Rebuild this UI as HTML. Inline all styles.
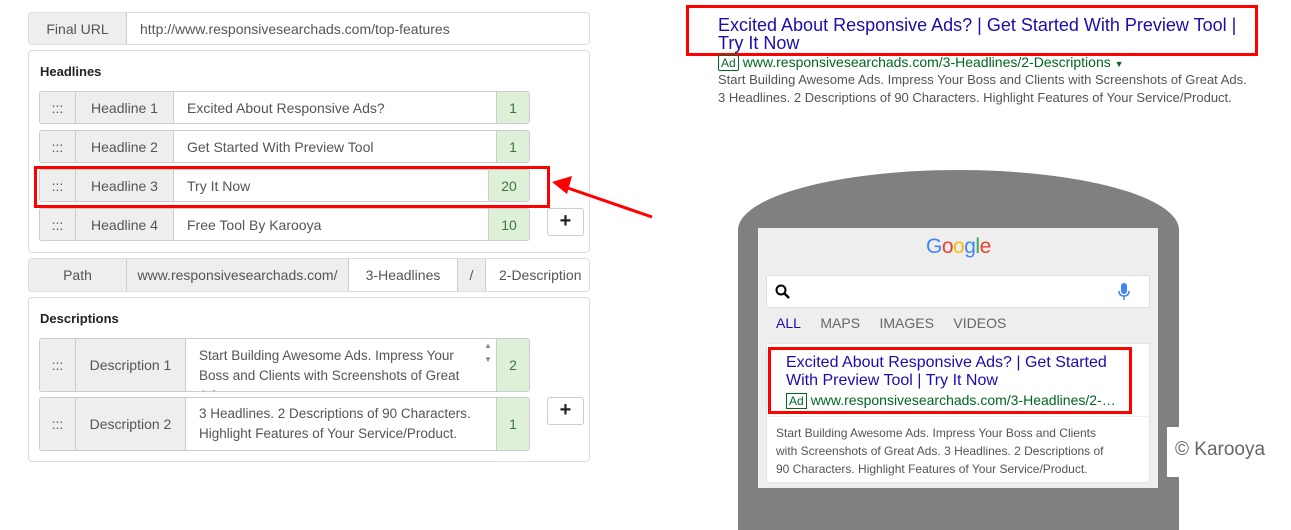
<!DOCTYPE html>
<html><head><meta charset="utf-8"><style>
*{box-sizing:border-box;margin:0;padding:0}
body{width:1291px;height:477px;overflow:hidden;background:#fff;font-family:"Liberation Sans",sans-serif;position:relative;color:#555}
.a{position:absolute}
.box{position:absolute;border:1px solid #ddd;border-radius:4px}
.cell{position:absolute;top:0;bottom:0;display:flex;align-items:center;font-size:14px;color:#555;border-right:1px solid #ccc}
.g{background:#eee;justify-content:center}
.w{background:#fff;padding-left:13px;color:#555}
.c{background:#dff0d8;color:#3c763d;justify-content:center;border-right:none}
.row{position:absolute;left:39px;width:491px;height:33px;border:1px solid #ccc;border-radius:3px;overflow:hidden}
.plus{position:absolute;left:547px;width:37px;height:28px;border:1px solid #ccc;border-radius:3px;font-size:20px;font-weight:bold;color:#222;text-align:center;line-height:25px}
.t{font-size:13px;font-weight:bold;color:#222}
.blue{color:#1a0dab}
</style></head><body>
<div class="box" style="left:28px;top:12px;width:562px;height:33px;overflow:hidden">
 <div class="cell g" style="left:0;width:98px">Final URL</div>
 <div class="cell w" style="left:98px;right:0;border:none">http://www.responsivesearchads.com/top-features</div>
</div>
<div class="box" style="left:28px;top:50px;width:562px;height:203px"></div>
<div class="a t" style="left:40px;top:64px">Headlines</div>
<div class="row" style="top:91px"><div class="cell g" style="left:0;width:36px">:::</div><div class="cell g" style="left:36px;width:98px">Headline 1</div><div class="cell w" style="left:134px;width:323px">Excited About Responsive Ads?</div><div class="cell c" style="left:457px;right:0">1</div></div>
<div class="row" style="top:130px"><div class="cell g" style="left:0;width:36px">:::</div><div class="cell g" style="left:36px;width:98px">Headline 2</div><div class="cell w" style="left:134px;width:323px">Get Started With Preview Tool</div><div class="cell c" style="left:457px;right:0">1</div></div>
<div class="row" style="top:169px"><div class="cell g" style="left:0;width:36px">:::</div><div class="cell g" style="left:36px;width:98px">Headline 3</div><div class="cell w" style="left:134px;width:315px">Try It Now</div><div class="cell c" style="left:449px;right:0">20</div></div>
<div class="row" style="top:208px"><div class="cell g" style="left:0;width:36px">:::</div><div class="cell g" style="left:36px;width:98px">Headline 4</div><div class="cell w" style="left:134px;width:315px">Free Tool By Karooya</div><div class="cell c" style="left:449px;right:0">10</div></div>
<div class="plus" style="top:208px">+</div>
<div class="a" style="left:34px;top:166px;width:516px;height:42px;border:3px solid #f00"></div>
<svg class="a" style="left:540px;top:170px" width="120" height="55"><line x1="112" y1="47" x2="22" y2="16" stroke="#f00" stroke-width="3"/><polygon points="12,12 32,6 27,24" fill="#f00"/></svg>
<div class="box" style="left:28px;top:258px;width:562px;height:34px;overflow:hidden">
 <div class="cell g" style="left:0;width:98px">Path</div>
 <div class="cell g" style="left:98px;width:222px">www.responsivesearchads.com/</div>
 <div class="cell w" style="left:320px;width:109px;justify-content:center;padding:0">3-Headlines</div>
 <div class="cell g" style="left:429px;width:28px">/</div>
 <div class="cell w" style="left:457px;width:96px;border:none;white-space:nowrap;overflow:hidden">2-Descriptions</div>
 <div class="a" style="left:553px;top:0;bottom:0;right:0;background:#fff"></div>
</div>
<div class="box" style="left:28px;top:297px;width:562px;height:165px"></div>
<div class="a t" style="left:40px;top:311px">Descriptions</div>
<div class="row" style="top:338px;height:54px"><div class="cell g" style="left:0;width:36px">:::</div><div class="cell g" style="left:36px;width:110px">Description 1</div><div class="cell w" style="left:146px;width:311px;align-items:flex-start;padding:7px 24px 0 13px;line-height:20px;font-size:13.5px;overflow:hidden">Start Building Awesome Ads. Impress Your Boss and Clients with Screenshots of Great Ads.</div><div class="cell c" style="left:457px;right:0">2</div><div class="a" style="left:440px;top:0;width:16px;height:52px;background:#fff;font-size:8px;color:#888;text-align:center;line-height:14px">▲<br>▼</div></div>
<div class="row" style="top:397px;height:54px"><div class="cell g" style="left:0;width:36px">:::</div><div class="cell g" style="left:36px;width:110px">Description 2</div><div class="cell w" style="left:146px;width:311px;align-items:flex-start;padding-top:6px;line-height:20px;font-size:13.5px">3 Headlines. 2 Descriptions of 90 Characters. Highlight Features of Your Service/Product.</div><div class="cell c" style="left:457px;right:0">1</div></div>
<div class="plus" style="top:397px">+</div>
<div class="a" style="left:686px;top:5px;width:572px;height:51px;border:3px solid #f00"></div>
<div class="a blue" style="left:718px;top:16px;font-size:18px;line-height:18px;width:540px;white-space:nowrap">Excited About Responsive Ads? | Get Started With Preview Tool |<br>Try It Now</div>
<div class="a" style="left:718px;top:54px;font-size:14px;color:#006621;white-space:nowrap"><span style="border:1px solid #006621;border-radius:2px;padding:0 2px;font-size:12px;margin-right:4px">Ad</span>www.responsivesearchads.com/3-Headlines/2-Descriptions <span style="font-size:9px">▼</span></div>
<div class="a" style="left:718px;top:71px;font-size:13px;color:#545454;line-height:18px;white-space:nowrap">Start Building Awesome Ads. Impress Your Boss and Clients with Screenshots of Great Ads.<br>3 Headlines. 2 Descriptions of 90 Characters. Highlight Features of Your Service/Product.</div>
<div class="a" style="left:738px;top:170px;width:441px;height:360px;background:#808080;border-radius:50% 50% 0 0/60px 60px 0 0"></div>
<div class="a" style="left:758px;top:228px;width:400px;height:260px;background:#eee"></div>
<div class="a" style="left:926px;top:235px;font-size:21px;letter-spacing:-0.5px"><span style="color:#4285f4">G</span><span style="color:#ea4335">o</span><span style="color:#fbbc05">o</span><span style="color:#4285f4">g</span><span style="color:#34a853">l</span><span style="color:#ea4335">e</span></div>
<div class="a" style="left:766px;top:275px;width:384px;height:33px;background:#fff;border:1px solid #ddd;border-radius:2px"></div>
<svg class="a" style="left:775px;top:284px" width="16" height="16"><circle cx="6" cy="6" r="4.5" fill="none" stroke="#000" stroke-width="2"/><line x1="9" y1="9" x2="14" y2="14" stroke="#000" stroke-width="2.5"/></svg>
<svg class="a" style="left:1117px;top:283px" width="14" height="18"><rect x="4" y="0" width="6" height="11" rx="3" fill="#4285f4"/><path d="M2 8 Q2 13 7 13 Q12 13 12 8" fill="none" stroke="#4285f4" stroke-width="1.5"/><line x1="7" y1="13" x2="7" y2="17" stroke="#4285f4" stroke-width="1.5"/></svg>
<div class="a" style="left:776px;top:315px;font-size:14px;color:#666"><span style="color:#1a0dab">ALL</span>&nbsp;&nbsp;&nbsp;&nbsp; MAPS&nbsp;&nbsp;&nbsp;&nbsp; IMAGES&nbsp;&nbsp;&nbsp;&nbsp; VIDEOS</div>
<div class="a" style="left:766px;top:343px;width:384px;height:140px;background:#fff;border:1px solid #e4e4e4"></div>
<div class="a" style="left:766px;top:416px;width:384px;height:1px;background:#eee"></div>
<div class="a" style="left:768px;top:347px;width:364px;height:67px;border:3px solid #f00"></div>
<div class="a blue" style="left:786px;top:354px;font-size:16px;line-height:18px">Excited About Responsive Ads? | Get Started<br>With Preview Tool | Try It Now</div>
<div class="a" style="left:786px;top:392px;font-size:14px;color:#006621;white-space:nowrap"><span style="border:1px solid #006621;padding:0 2px;font-size:12px;margin-right:4px">Ad</span>www.responsivesearchads.com/3-Headlines/2-…</div>
<div class="a" style="left:776px;top:424px;font-size:12px;color:#545454;line-height:18px">Start Building Awesome Ads. Impress Your Boss and Clients<br>with Screenshots of Great Ads. 3 Headlines. 2 Descriptions of<br>90 Characters. Highlight Features of Your Service/Product.</div>
<div class="a" style="left:1167px;top:427px;width:124px;height:50px;background:#fff"></div>
<div class="a" style="left:1175px;top:439px;font-size:19px;color:#666">© Karooya</div>
</body></html>
